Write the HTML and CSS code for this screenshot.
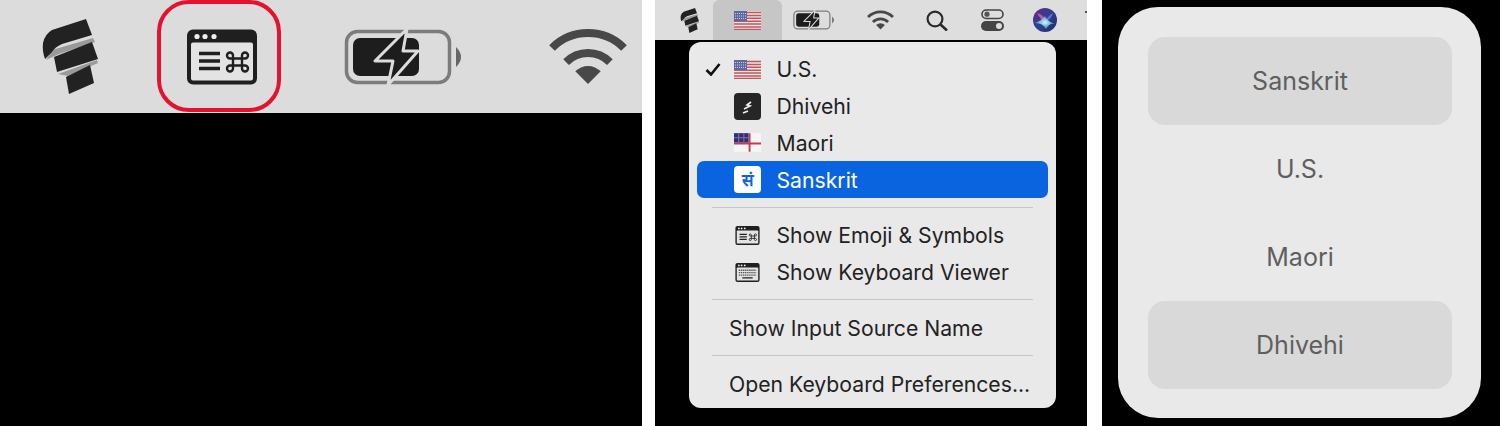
FILE: index.html
```html
<!DOCTYPE html>
<html>
<head>
    <title>Input Sources</title>
    <link rel="stylesheet" href="styles.css">
</head>
<body>
    <svg class="icon-defs" aria-hidden="true">
        <symbol id="logo" viewBox="0 0 58 75">
            <path fill="#9a9a9a" d="M51 19L53 23L17 35L4 41L10 31Z"/>
            <path fill="#9a9a9a" d="M55 41L56 44L26 57L16 55Z"/>
            <path fill="#222" d="M44 0L50 16L20 25Q13 28 10 33L3 40Q0 32 1 24Q3 15 10 11Z"/>
            <path fill="#222" d="M50 23L56 40L15 53L12 38Z"/>
            <path fill="#222" d="M48 46L52 64L27 75L24 58Z"/>
        </symbol>
        <symbol id="emoji" viewBox="0 0 70 55">
            <rect width="70" height="55" rx="6" fill="#1f1f1f"/>
            <rect x="4" y="13" width="62" height="38" rx="2" fill="#e3e3e3"/>
            <circle cx="10" cy="7" r="2.6" fill="#eee"/>
            <circle cx="18" cy="7" r="2.6" fill="#eee"/>
            <circle cx="27" cy="7" r="2.6" fill="#eee"/>
            <path d="M12 24H33M12 31.5H33M12 39H33" stroke="#1f1f1f" stroke-width="3.6" fill="none"/>
            <path d="M46 26V39M55 26V39M43 29H58M43 36H58M46 26A3 3 0 1 0 43 29M55 26A3 3 0 1 1 58 29M46 39A3 3 0 1 1 43 36M55 39A3 3 0 1 0 58 36" stroke="#1f1f1f" stroke-width="2.4" fill="none"/>
        </symbol>
        <symbol id="viewer" viewBox="0 0 70 55">
            <rect width="70" height="55" rx="6" fill="#1f1f1f"/>
            <rect x="4" y="13" width="62" height="38" rx="2" fill="#e3e3e3"/>
            <circle cx="10" cy="7" r="2.6" fill="#eee"/>
            <circle cx="18" cy="7" r="2.6" fill="#eee"/>
            <circle cx="27" cy="7" r="2.6" fill="#eee"/>
            <path d="M10 21H60M10 28H60M10 35H60" stroke="#555" stroke-width="4" stroke-dasharray="4 2" fill="none"/>
            <path d="M20 43H50" stroke="#333" stroke-width="4" fill="none"/>
        </symbol>
        <symbol id="battery" viewBox="0 0 120 56">
            <rect x="2.5" y="2.5" width="103" height="51" rx="11" fill="none" stroke="#7c7c7c" stroke-width="3.5"/>
            <rect x="9" y="9" width="66" height="38" rx="7" fill="#1d1d1d"/>
            <path d="M112 18Q122 28 112 38Z" fill="#666"/>
            <path d="M63 0L31 32H49L44 56L74 22H59Z" fill="#1d1d1d" stroke="#dcdcdc" stroke-width="3" stroke-linejoin="round"/>
        </symbol>
        <symbol id="wifi" viewBox="0 0 78 55">
            <path d="M3 19A51 51 0 0 1 75 19M17.1 33.1A31 31 0 0 1 60.9 33.1" fill="none" stroke="#484848" stroke-width="8"/>
            <path d="M39 55L26.3 42.3A18 18 0 0 1 51.7 42.3Z" fill="#484848"/>
        </symbol>
        <symbol id="flag-us" viewBox="0 0 27 19">
            <rect width="27" height="19" fill="#f1e6e6"/>
            <path d="M0 1.5H27M0 4.4H27M0 7.3H27M0 10.2H27M0 13.1H27M0 16H27M0 18.4H27" stroke="#c0595f" stroke-width="1.5"/>
            <rect width="13" height="10" fill="#5c6aa0"/>
            <path d="M1 2.5H12M1 5H12M1 7.5H12" stroke="#c9cfe4" stroke-width="1" stroke-dasharray="1 1"/>
        </symbol>
        <symbol id="flag-maori" viewBox="0 0 26 18">
            <rect width="26" height="18" fill="#f6f6f6"/>
            <path d="M0 10H26M15 0V18" stroke="#c8384e" stroke-width="1.8"/>
            <rect width="14" height="9" fill="#2d2f78"/>
            <path d="M4.5 0V9M9.5 0V9M0 4.5H14" stroke="#8f6f96" stroke-width="1"/>
        </symbol>
        <symbol id="search" viewBox="0 0 22 21">
            <circle cx="9" cy="9" r="7.4" fill="none" stroke="#2a2a2a" stroke-width="2.2"/>
            <path d="M14.5 14.5L21 20.5" stroke="#2a2a2a" stroke-width="2.6"/>
        </symbol>
        <symbol id="toggles" viewBox="0 0 23 22">
            <rect x="1" y="1" width="21" height="8.5" rx="4.2" fill="none" stroke="#444" stroke-width="1.6"/>
            <circle cx="6" cy="5.2" r="2.6" fill="#555"/>
            <rect y="12" width="23" height="10" rx="5" fill="#444"/>
            <circle cx="18" cy="17" r="3" fill="#ddd"/>
        </symbol>
        <linearGradient id="siri-bg" x1="0" y1="0" x2="1" y2="1">
            <stop offset="0" stop-color="#5a2f86"/>
            <stop offset="0.55" stop-color="#2d3f8e"/>
            <stop offset="1" stop-color="#1d2a5e"/>
        </linearGradient>
        <radialGradient id="siri-glow" cx="50%" cy="50%" r="50%">
            <stop offset="0" stop-color="#d8f6f8"/>
            <stop offset="1" stop-color="#4fc3dc" stop-opacity="0.6"/>
        </radialGradient>
        <symbol id="siri" viewBox="0 0 24 24">
            <circle cx="12" cy="12" r="12" fill="url(#siri-bg)"/>
            <path d="M4 5Q10 6 13 13Q7 12 4 5Z" fill="#cf4fa6"/>
            <path d="M20 5Q16 7 12 13Q18 12 20 5Z" fill="#5f74d8"/>
            <path d="M2 15Q8 13 12 8Q15 14 22 16Q16 15 13 21Q10 15 2 15Z" fill="url(#siri-glow)"/>
        </symbol>
    </svg>

    <div class="shots">
        <section class="shot shot--zoomed">
            <header class="bar bar--large">
                <svg class="bar__logo-lg"><use href="#logo"/></svg>
                <svg class="bar__emoji-lg"><use href="#emoji"/></svg>
                <svg class="bar__battery-lg"><use href="#battery"/></svg>
                <svg class="bar__wifi-lg"><use href="#wifi"/></svg>
                <span class="highlight-box"></span>
            </header>
        </section>

        <section class="shot shot--menu">
            <header class="bar bar--small">
                <svg class="bar__logo"><use href="#logo"/></svg>
                <span class="bar__active"><svg class="flag"><use href="#flag-us"/></svg></span>
                <svg class="bar__battery"><use href="#battery"/></svg>
                <svg class="bar__wifi"><use href="#wifi"/></svg>
                <svg class="bar__search"><use href="#search"/></svg>
                <svg class="bar__toggles"><use href="#toggles"/></svg>
                <svg class="bar__siri"><use href="#siri"/></svg>
                <span class="bar__dot"></span>
            </header>
            <div class="menu">
                <div class="menu__row">
                    <span class="menu__check">
                        <svg viewBox="0 0 16 13" class="menu__tick"><path d="M1.5 7L6 11.5L14.5 1" fill="none" stroke="#111" stroke-width="2.6"/></svg>
                    </span>
                    <svg class="flag"><use href="#flag-us"/></svg>
                    <span class="menu__label">U.S.</span>
                </div>
                <div class="menu__row">
                    <span class="menu__check"></span>
                    <span class="tile tile--dark">
                        <svg viewBox="0 0 27 27" class="tile__mark"><path d="M17 9L13 12L16 13L10 16M9 20L14 18" fill="none" stroke="#eee" stroke-width="1.7"/></svg>
                    </span>
                    <span class="menu__label">Dhivehi</span>
                </div>
                <div class="menu__row">
                    <span class="menu__check"></span>
                    <svg class="flag"><use href="#flag-maori"/></svg>
                    <span class="menu__label">Maori</span>
                </div>
                <div class="menu__row menu__row--selected">
                    <span class="menu__check"></span>
                    <span class="tile tile--light">सं</span>
                    <span class="menu__label">Sanskrit</span>
                </div>
                <div class="menu__sep"></div>
                <div class="menu__row">
                    <span class="menu__check"></span>
                    <svg class="menu__kb"><use href="#emoji"/></svg>
                    <span class="menu__label">Show Emoji &amp; Symbols</span>
                </div>
                <div class="menu__row">
                    <span class="menu__check"></span>
                    <svg class="menu__kb"><use href="#viewer"/></svg>
                    <span class="menu__label">Show Keyboard Viewer</span>
                </div>
                <div class="menu__sep"></div>
                <div class="menu__row menu__row--plain">
                    <span class="menu__label">Show Input Source Name</span>
                </div>
                <div class="menu__sep"></div>
                <div class="menu__row menu__row--plain">
                    <span class="menu__label">Open Keyboard Preferences...</span>
                </div>
            </div>
        </section>

        <section class="shot shot--card">
            <div class="card">
                <div class="card__item card__item--shaded">Sanskrit</div>
                <div class="card__item">U.S.</div>
                <div class="card__item">Maori</div>
                <div class="card__item card__item--shaded">Dhivehi</div>
            </div>
        </section>
    </div>
</body>
</html>
```

FILE: styles.css
```css
* {
    margin: 0;
    padding: 0;
    box-sizing: border-box;
}

body {
    font-family: Inter, "Liberation Sans", sans-serif;
    background: white;
    width: 1500px;
    height: 426px;
    overflow: hidden;
}

.icon-defs {
    position: absolute;
    width: 0;
    height: 0;
}

.shots {
    display: flex;
    height: 426px;
}

.shot {
    background: black;
    height: 426px;
}

.shot--zoomed {
    width: 642px;
}

.shot--menu {
    width: 432px;
    margin-left: 13px;
}

.shot--card {
    width: 398px;
    margin-left: 15px;
    padding: 7px 19px 8px 16px;
}

.bar {
    display: flex;
    align-items: center;
    position: relative;
}

.bar svg {
    flex: none;
}

/* zoomed menu bar */
.bar--large {
    height: 113px;
    padding-left: 42px;
    background: #dcdcdc;
}

.bar__logo-lg {
    width: 58px;
    height: 75px;
}

.bar__emoji-lg {
    width: 70px;
    height: 56px;
    margin-left: 87px;
}

.bar__battery-lg {
    width: 120px;
    height: 56px;
    margin-left: 87px;
}

.bar__wifi-lg {
    width: 78px;
    height: 55px;
    margin-left: 85px;
}

.highlight-box {
    position: absolute;
    left: 157px;
    top: 0;
    width: 124px;
    height: 112px;
    border: 4px solid #e5122f;
    border-radius: 32px;
}

/* regular menu bar */
.bar--small {
    height: 40px;
    padding-left: 25px;
    background: #dedede;
}

.bar__logo {
    width: 20px;
    height: 25px;
}

.bar__active {
    display: flex;
    align-items: center;
    justify-content: center;
    width: 69px;
    height: 40px;
    margin-left: 13px;
    background: #c6c6c6;
    border-radius: 6px 6px 0 0;
}

.bar__battery {
    width: 42px;
    height: 20px;
    margin-left: 11px;
}

.bar__wifi {
    width: 27px;
    height: 20px;
    margin-left: 32px;
}

.bar__search {
    width: 22px;
    height: 21px;
    margin-left: 32px;
}

.bar__toggles {
    width: 23px;
    height: 22px;
    margin-left: 33px;
}

.bar__siri {
    width: 24px;
    height: 24px;
    margin-left: 29px;
}

.bar__dot {
    width: 2px;
    height: 2px;
    margin-left: 28px;
    margin-bottom: 16px;
    background: #555;
}

.flag {
    width: 27px;
    height: 19px;
    flex: none;
}

/* dropdown */
.menu {
    width: 367px;
    height: 366px;
    margin: 2px 0 0 34px;
    padding: 9px 8px 0;
    background: #e9e9e9;
    border-radius: 12px;
    color: #222;
    font-size: 21.2px;
}

.menu__row {
    display: flex;
    align-items: center;
    height: 36.75px;
    padding-left: 8px;
    border-radius: 7px;
    white-space: nowrap;
}

.menu__row--plain {
    padding-left: 32px;
}

.menu__row--selected {
    background: #0a64e0;
    color: white;
}

.menu__check {
    display: flex;
    align-items: center;
    width: 29px;
    flex: none;
}

.menu__tick {
    width: 16px;
    height: 13px;
}

.menu__label {
    margin-left: 15.5px;
}

.menu__row--plain .menu__label {
    margin-left: 0;
}

.menu__kb {
    width: 25px;
    height: 19px;
    margin: 0 1px;
    flex: none;
}

.menu__sep {
    height: 1px;
    margin: 8.5px 15px 9.5px;
    background: #c6c6c6;
}

.tile {
    display: flex;
    align-items: center;
    justify-content: center;
    width: 27px;
    height: 27px;
    flex: none;
    border-radius: 4px;
}

.tile--dark {
    background: #262626;
}

.tile__mark {
    width: 27px;
    height: 27px;
}

.tile--light {
    background: white;
    color: #0a64e0;
    font-size: 17px;
    font-weight: bold;
}

/* right hand card */
.card {
    height: 411px;
    padding: 30px 29px 30px 30px;
    background: #e9e9e9;
    border-radius: 40px;
}

.card__item {
    display: flex;
    align-items: center;
    justify-content: center;
    height: 88px;
    border-radius: 17px;
    color: #5f5f5f;
    font-size: 25px;
}

.card__item--shaded {
    background: #d9d9d9;
}
```
